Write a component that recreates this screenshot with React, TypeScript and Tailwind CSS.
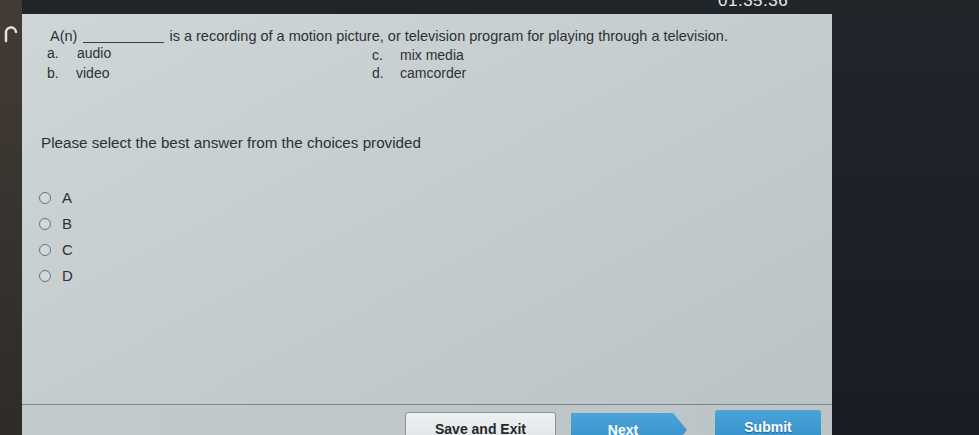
import React from 'react';

const answers = ['A', 'B', 'C', 'D'];

export default function App() {
  return (
    <div className="flex w-[979px] h-[435px] overflow-hidden bg-[#1b2128] font-['Liberation_Sans',Arial,sans-serif] text-[#2d3135]">
      {/* Left edge of the monitor */}
      <div className="w-[22px] shrink-0 bg-linear-to-b from-[#433b35] to-[#2e2b29] pt-[24px] pl-[3px]">
        <svg width="16" height="20" viewBox="0 0 16 20" fill="none">
          <path d="M3 17 V9 A5 5 0 0 1 13 8" stroke="#e4e2de" strokeWidth="2.5" strokeLinecap="round" />
        </svg>
      </div>

      <div className="flex flex-col flex-1">
        {/* Top bar with timer */}
        <div className="h-[14px] shrink-0 overflow-hidden bg-[#20252a] pl-[696px]">
          <div className="-mt-[9px] text-[17px] leading-[20px] text-[#e8eaec] tracking-[0.5px]">01:35:36</div>
        </div>

        <div className="flex flex-1">
          {/* Question panel */}
          <div className="w-[810px] shrink-0 flex flex-col bg-linear-to-br from-[#cfd6d8] via-[#c4ccce] to-[#b9c2c5]">
            <div className="h-[390px] shrink-0 pl-[28px] pt-[14px]">
              <div className="flex items-end text-[14.5px] leading-[17px]">
                <span>A(n)</span>
                <span className="ml-[6px] w-[81px] border-b border-[#3a3e42] mb-[2px]"></span>
                <span className="ml-[5px]">is a recording of a motion picture, or television program for playing through a television.</span>
              </div>

              <div className="flex text-[14px] leading-[20px] -mt-[2px]">
                <div className="w-[325px] -ml-[3px]">
                  <div className="flex"><span className="w-[30px]">a.</span><span>audio</span></div>
                  <div className="flex"><span className="w-[29px]">b.</span><span>video</span></div>
                </div>
                <div className="pt-[3px] leading-[18px]">
                  <div className="flex"><span className="w-[28px]">c.</span><span>mix media</span></div>
                  <div className="flex"><span className="w-[28px]">d.</span><span>camcorder</span></div>
                </div>
              </div>

              <div className="mt-[51px] -ml-[9px] text-[15.2px] leading-[18px]">
                Please select the best answer from the choices provided
              </div>

              <div className="mt-[33px] flex flex-col">
                {answers.map((a) => (
                  <label key={a} className="flex items-center h-[26px] -ml-[11px]">
                    <span className="w-[12px] h-[12px] rounded-full border-[1.5px] border-[#6a7175] bg-[#d3d9db]"></span>
                    <span className="ml-[11px] text-[15px]">{a}</span>
                  </label>
                ))}
              </div>
            </div>

            {/* Footer */}
            <div className="flex-1 border-t border-[#7e868a] bg-linear-to-r from-[#c3cacc] to-[#bcc4c7] flex items-start pl-[383px] pt-[6px] gap-[15px]">
              <button className="w-[151px] h-[34px] mt-[1px] rounded-[3px] border border-[#8c9295] bg-linear-to-b from-[#eef1f2] to-[#dfe3e5] text-[14px] font-bold text-[#23272a] pt-[1px]">
                Save and Exit
              </button>
              <button className="w-[116px] h-[34px] mt-[2px] bg-linear-to-b from-[#4aa4d8] to-[#338fc8] text-[14px] font-bold text-white pr-[12px] [clip-path:polygon(0_0,88%_0,100%_50%,88%_100%,0_100%)]">
                Next
              </button>
              <button className="ml-[13px] w-[106px] h-[34px] -mt-[1px] rounded-[3px] bg-linear-to-b from-[#4aa4d8] to-[#338fc8] text-[14px] font-bold text-white [text-shadow:0_1px_1px_rgba(0,0,0,0.35)]">
                Submit
              </button>
            </div>
          </div>

          {/* Dark screen surround */}
          <div className="flex-1 bg-linear-to-b from-[#1f252b] to-[#181d24]"></div>
        </div>
      </div>
    </div>
  );
}
